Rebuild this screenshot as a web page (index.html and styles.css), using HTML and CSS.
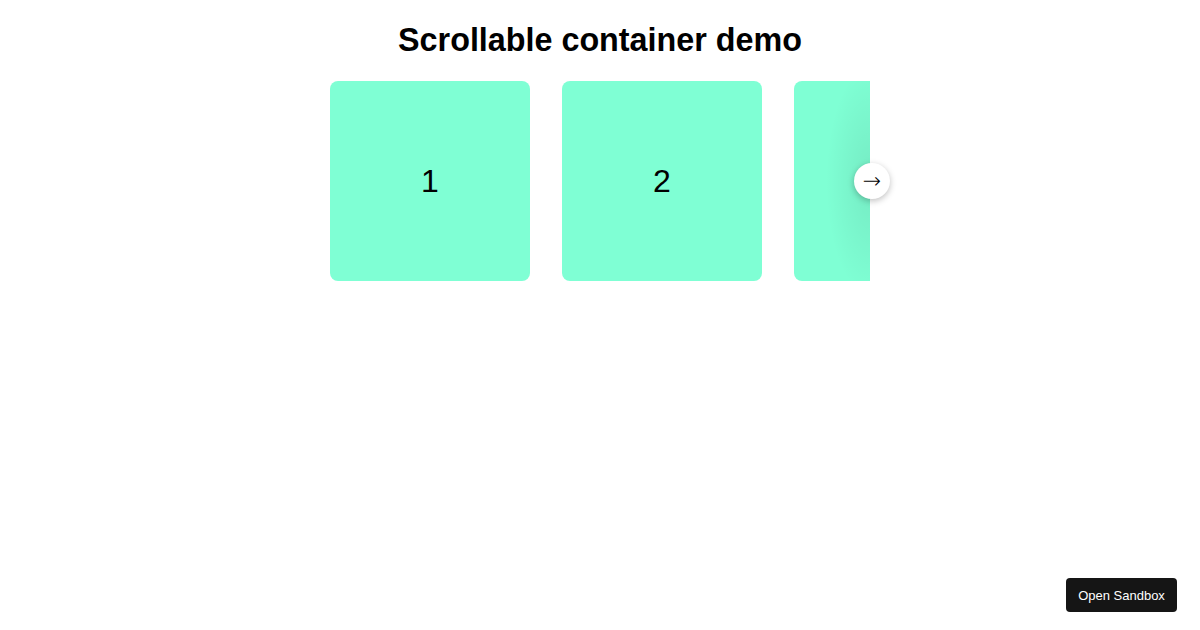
FILE: index.html
```html
<!DOCTYPE html>
<html>
<head>
<meta charset="utf-8">
<link rel="stylesheet" href="styles.css">
</head>
<body>
<h1 class="title">Scrollable container demo</h1>
<div class="wrap">
  <div class="scroller">
    <div class="card">1</div>
    <div class="card">2</div>
    <div class="card">3</div>
    <div class="card">4</div>
  </div>
  <div class="fade"></div>
  <button class="arrow">→</button>
</div>
<button class="sandbox">Open Sandbox</button>
</body>
</html>
```
FILE: styles.css
```css
html, body {
  margin: 0;
  padding: 0;
  background: #fff;
  font-family: "Liberation Sans", Arial, sans-serif;
}
body {
  height: 630px;
  position: relative;
  overflow: hidden;
}
.title {
  margin: 22px 0 22px;
  text-align: center;
  font-size: 32.3px;
  line-height: 37px;
  font-weight: bold;
  color: #000;
}
.wrap {
  position: relative;
  width: 540px;
  height: 200px;
  margin: 0 auto;
}
.scroller {
  display: flex;
  gap: 32px;
  width: 540px;
  height: 200px;
  overflow: hidden;
}
.card {
  flex: 0 0 200px;
  height: 200px;
  background: #7fffd4;
  border-radius: 8px;
  display: flex;
  align-items: center;
  justify-content: center;
  font-size: 32px;
  color: #000;
}
.fade {
  position: absolute;
  top: 0;
  right: 0;
  width: 44px;
  height: 200px;
  background: radial-gradient(ellipse 44px 115px at 100% 50%, rgba(0,0,0,0.08), rgba(0,0,0,0) 100%);
  pointer-events: none;
}
.arrow {
  position: absolute;
  top: 82px;
  right: -20px;
  width: 36px;
  height: 36px;
  border-radius: 50%;
  border: none;
  background: #fff;
  box-shadow: 0 2px 6px rgba(0,0,0,0.25);
  font-family: "DejaVu Sans", sans-serif;
  font-weight: 200;
  font-size: 22px;
  line-height: 34px;
  padding: 0;
  color: #000;
  text-align: center;
}
.sandbox {
  position: absolute;
  right: 23px;
  bottom: 18px;
  width: 111px;
  height: 34px;
  background: #151515;
  color: #fff;
  border: none;
  border-radius: 4px;
  font-family: "Liberation Sans", Arial, sans-serif;
  font-size: 13px;
  padding: 0;
}
```
